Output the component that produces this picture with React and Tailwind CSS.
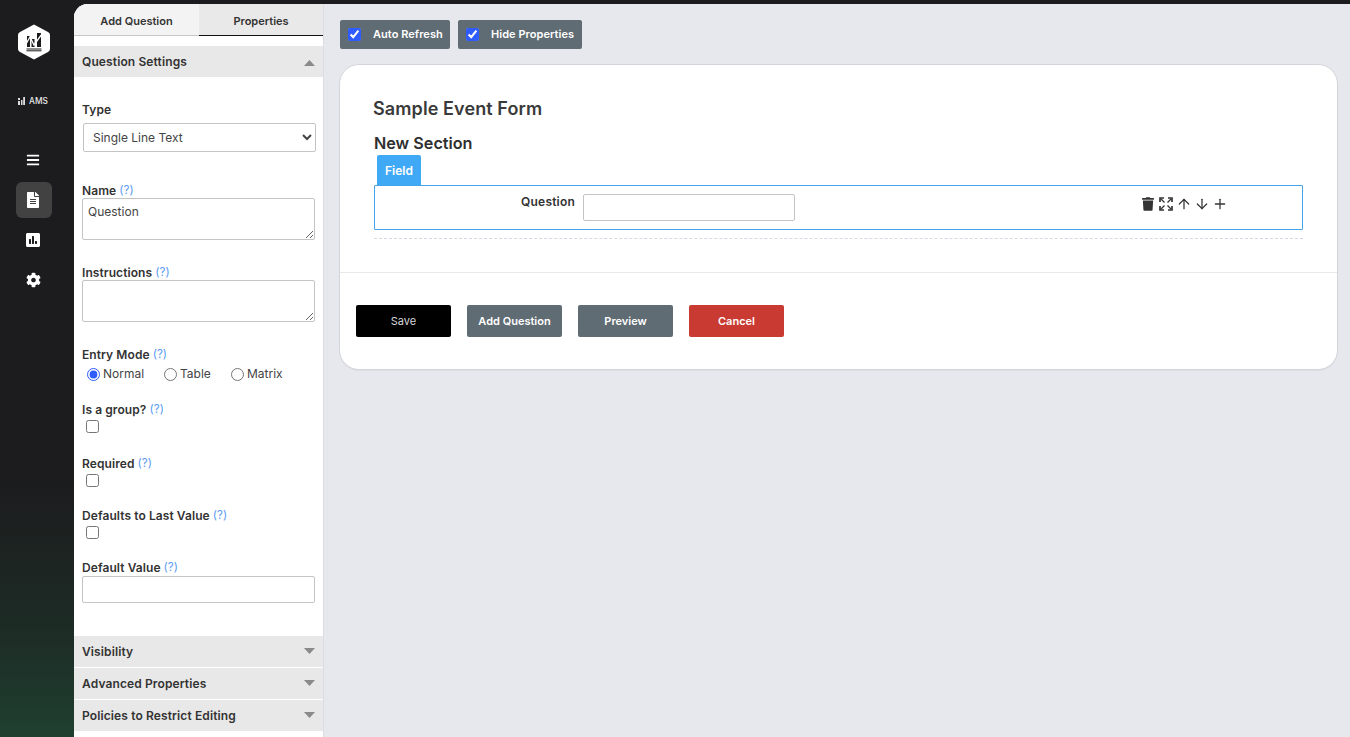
import React from "react";
import { FaBars, FaFileAlt, FaPoll, FaCog, FaTrash } from "react-icons/fa";
import { ArrowUp, ArrowDown, Plus } from "lucide-react";

const Help = () => <span className="ml-[3px] text-[11.5px] font-normal text-[#5b9cf0] relative -top-[1px]">(?)</span>;
const Label = ({ children, help = true, className = "" }) => (
  <div className={`h-[16px] leading-[16px] text-[12px] tracking-[0.08px] font-semibold text-[#333] whitespace-nowrap ${className}`}>
    {children}{help && <Help />}
  </div>
);
const Caret = ({ up }) => (
  <svg width="11" height="6" viewBox="0 0 11 6" className={`relative text-[#8a8a8a] ${up ? "top-[1px]" : "-top-[1px]"}`}><path d={up ? "M0 6 L5.5 0 L11 6Z" : "M0 0 L5.5 6 L11 0Z"} fill="currentColor" /></svg>
);
const Section = ({ title, up, className = "" }) => (
  <div className={`h-[31px] bg-[#e8e8e8] flex items-center justify-between pl-2 pr-2 text-[12px] tracking-[0.12px] font-semibold text-[#333] ${className}`}>
    <span className="pt-[1px]">{title}</span><Caret up={up} />
  </div>
);
const Check = () => <input type="checkbox" className="ml-1 block w-[13px] h-[13px] m-0" />;
const Radio = ({ label, checked, className }) => (
  <label className={`flex items-center text-[12px] text-[#444] ${className}`}>
    <input type="radio" name="mode" defaultChecked={checked} className="w-[13px] h-[13px] m-0 mr-[3px] accent-[#2f5cff]" />{label}
  </label>
);
const TopToggle = ({ label, className }) => (
  <label className={`h-[29px] bg-[#606c74] rounded-[2px] flex items-center pl-2 text-white text-[11px] tracking-[0.05px] font-semibold ${className}`}>
    <input type="checkbox" defaultChecked className="w-[13px] h-[13px] m-0 mr-[12px] accent-[#2f5cff]" />{label}
  </label>
);
const Btn = ({ children, className = "" }) => (
  <button className={`w-[95px] h-[32px] rounded-[2px] text-[11px] ${className}`}>{children}</button>
);

export default function App() {
  return (
    <div className="w-[1350px] h-[737px] overflow-hidden flex bg-[#1c1c1e] text-[#333] font-['Inter',sans-serif]">
      <aside className="w-[74px] shrink-0 h-full pr-[8px] flex flex-col items-center bg-[linear-gradient(180deg,#1c1c1e_0%,#1c1c1e_65%,#1d2b25_85%,#1f4030_100%)]">
        <svg width="32" height="36" viewBox="0 0 32 36" className="mt-[24px] ml-[2px]">
          <path d="M16 0.5 L30 8 Q32 9 32 11 V25 Q32 27 30 28 L16 35.5 L2 28 Q0 27 0 25 V11 Q0 9 2 8Z" fill="#fff" />
          <path d="M9 12h3v11H9zM13.500 15h3v8h-3zM19 9h4v14h-4z" fill="#1c1c1e" />
          <path d="M8 20 L12 13 L16 21 L24 10" stroke="#fff" strokeWidth="1.3" fill="none" />
          <path d="M8.500 25h15M8.500 26.800h15" stroke="#1c1c1e" strokeWidth="1" />
        </svg>
        <div className="mt-[35px] h-[12px] flex items-center gap-[4px] text-[8.3px] text-[#e8e8e8] font-medium leading-none">
          <svg width="7" height="8" viewBox="0 0 7 8"><path d="M0 1h2v2H0zM0 4h2v4H0zM3 3h1.500v5H3zM5.200 0H7v8H5.200z" fill="#ddd" /></svg>
          AMS
        </div>
        <FaBars className="mt-[46px] text-white w-[14px] h-[14px]" />
        <div className="mt-[15px] ml-[2px] w-[36px] h-[36px] rounded-[6px] bg-[#424242] flex items-center justify-center pr-[2px]">
          <FaFileAlt className="text-white w-[12px] h-[16px]" />
        </div>
        <FaPoll className="mt-[14px] text-white w-[14px] h-[16px]" />
        <FaCog className="mt-[24px] text-white w-[15px] h-[16px]" />
      </aside>

      <div className="flex-1 flex flex-col min-w-0">
        <div className="h-[4px] shrink-0 bg-[#1c1c1e]" />
        <div className="flex-1 flex min-h-0 bg-[#e7e8ed] rounded-tl-[14px] overflow-hidden">
          <section className="w-[250px] shrink-0 h-full bg-white border-r border-[#dcdce2]">
            <div className="flex h-[32px] text-[11px] font-semibold text-[#333]">
              <div className="w-[125px] pt-[3px] bg-[#f3f3f3] border-b border-[#c8c8c8] flex items-center justify-center">Add Question</div>
              <div className="flex-1 pt-[3px] bg-[#e9e9e9] border-b border-[#111] flex items-center justify-center">Properties</div>
            </div>
            <Section title="Question Settings" up className="mt-[10px]" />
            <div className="px-2">
              <Label help={false} className="mt-[25px]">Type</Label>
              <select className="block mt-[5px] ml-px w-[233px] h-[29px] bg-white border border-[#c4c4c4] rounded-[2px] pl-[5px] text-[12px] text-[#444]">
                <option>Single Line Text</option>
              </select>
              <Label className="mt-[31px]">Name</Label>
              <textarea defaultValue="Question" className="block -mt-px w-[233px] h-[42px] border border-[#c4c4c4] rounded-[2px] px-[5px] py-[5px] text-[12px] leading-[16px] text-[#444]" />
              <Label className="mt-[25px]">Instructions</Label>
              <textarea className="block -mt-px w-[233px] h-[42px] border border-[#c4c4c4] rounded-[2px] px-[5px] py-[5px] text-[12px]" />
              <Label className="mt-[25px]">Entry Mode</Label>
              <div className="flex h-[16px] mt-[3px] pl-[5px]">
                <Radio label="Normal" checked className="w-[77px]" />
                <Radio label="Table" className="w-[67px]" />
                <Radio label="Matrix" />
              </div>
              <Label className="mt-[20px]">Is a group?</Label>
              <div className="mt-[2px]"><Check /></div>
              <Label className="mt-[23px]">Required</Label>
              <div className="mt-[2px]"><Check /></div>
              <Label className="mt-[21px]">Defaults to Last Value</Label>
              <div className="mt-[2px]"><Check /></div>
              <Label className="mt-[21px]">Default Value</Label>
              <input className="block w-[233px] h-[27px] border border-[#c4c4c4] rounded-[2px]" />
            </div>
            <Section title="Visibility" className="mt-[33px]" />
            <Section title="Advanced Properties" className="mt-px" />
            <Section title="Policies to Restrict Editing" className="mt-px" />
          </section>

          <main className="flex-1 min-w-0 pl-[16px] pr-[12px] pt-[16px]">
            <div className="flex gap-2">
              <TopToggle label="Auto Refresh" className="w-[110px]" />
              <TopToggle label="Hide Properties" className="w-[124px]" />
            </div>
            <div className="mt-[15px] -ml-px h-[306px] bg-white rounded-[20px] border border-[#d4d5da] shadow-[0_1px_1px_rgba(0,0,0,0.04)]">
              <div className="px-[33px] pt-[33px] h-[208px] border-b border-[#e8e8e8]">
                <h1 className="text-[18px] tracking-[0.1px] leading-[22px] font-semibold text-[#3a3a3a]">Sample Event Form</h1>
                <h2 className="mt-[12px] ml-px text-[16.2px] leading-[22px] font-semibold text-[#2f2f2f]">New Section</h2>
                <div className="ml-[4px] mt-[1px] pt-px w-[44px] h-[30px] bg-[#3fa9f5] rounded-t-[2px] text-white text-[12px] font-semibold flex items-center justify-center">Field</div>
                <div className="ml-px w-[929px] h-[45px] border border-[#46a4ea] rounded-[1px] flex items-start">
                  <div className="w-[200px] text-right mt-[8px] text-[12px] tracking-[0.2px] leading-[16px] font-semibold text-[#333]">Question</div>
                  <input className="ml-[8px] mt-[8px] w-[212px] h-[27px] border border-[#c4c4c4] rounded-[2px]" />
                  <div className="ml-[347px] mt-[10px] flex items-center text-[#333]">
                    <FaTrash className="w-[12px] h-[14px]" />
                    <svg width="14" height="14" viewBox="0 0 14 14" fill="none" stroke="currentColor" className="ml-[5px]">
                      <path d="M1 5V1h4M9 1h4v4M13 9v4H9M5 13H1V9" strokeWidth="1.700" />
                      <path d="M2 2l3.500 3.500M12 2L8.500 5.500M12 12L8.500 8.500M2 12l3.500-3.500" strokeWidth="1.300" />
                    </svg>
                    <ArrowUp className="w-[16px] h-[16px] ml-[3px]" strokeWidth={1.9} />
                    <ArrowDown className="w-[16px] h-[16px] ml-[2px]" strokeWidth={1.9} />
                    <Plus className="w-[16px] h-[16px] ml-[2px]" strokeWidth={1.9} />
                  </div>
                </div>
                <div className="ml-px w-[929px] mt-[8px] border-t border-dashed border-[#d8d8e2]" />
              </div>
              <div className="pl-[16px] pt-[32px] flex gap-[16px]">
                <Btn className="bg-black font-normal text-[#d8d8d8]">Save</Btn>
                <Btn className="bg-[#606c74] font-semibold text-white">Add Question</Btn>
                <Btn className="bg-[#606c74] font-semibold text-white">Preview</Btn>
                <Btn className="bg-[#c93a32] font-semibold text-white">Cancel</Btn>
              </div>
            </div>
          </main>
        </div>
      </div>
    </div>
  );
}
